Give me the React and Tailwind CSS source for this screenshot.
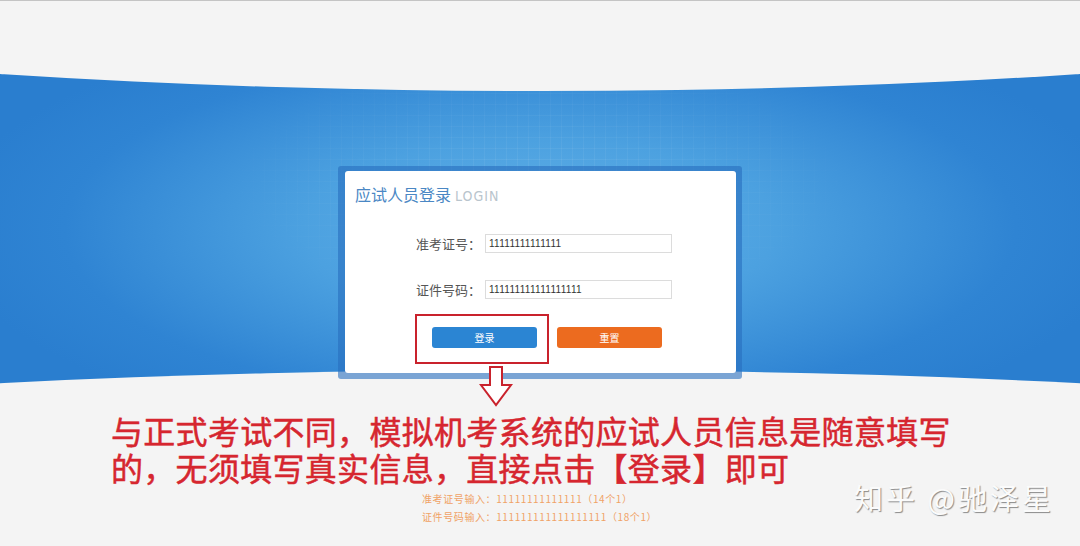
import React from 'react'

const cjk = "font-['Microsoft_YaHei','Noto_Sans_CJK_SC',sans-serif]"

function Field({ label, value }) {
    return (
        <div className="flex items-center h-[19px]">
            <span className="w-[128px] pr-[4px] text-right text-[13px] text-[#555] leading-none">{label}</span>
            <div className="w-[187px] h-[19px] border border-[#dcdcdc] bg-white flex items-center pl-[3px]">
                <span className="text-[10px] text-[#333] font-['Liberation_Sans',sans-serif] tracking-[0.3px]">{value}</span>
            </div>
        </div>
    )
}

export default function App() {
    return (
        <div className={`w-[1080px] h-[546px] bg-[#f4f4f4] relative overflow-hidden border-t border-[#c4c4c4] ${cjk}`}>
            {/* blue band */}
            <div className="relative mt-[70px] h-[315px] overflow-hidden bg-[radial-gradient(ellipse_55%_70%_at_50%_50%,#64b2e8_0%,#4ca1e0_40%,#2f84d3_80%,#2a7ecf_100%)]">
                <div className="absolute inset-0 bg-[linear-gradient(rgba(255,255,255,0.07)_1px,transparent_1px),linear-gradient(90deg,rgba(255,255,255,0.07)_1px,transparent_1px)] bg-[size:11px_11px] [mask-image:radial-gradient(ellipse_30%_45%_at_50%_35%,black,transparent)]" />
                <div className="absolute left-[-860px] top-[-420px] w-[2800px] h-[440px] rounded-[50%] bg-[#f4f4f4]" />
                <div className="absolute left-[-860px] top-[299px] w-[2800px] h-[340px] rounded-[50%] bg-[#f4f4f4]" />

                {/* login card */}
                <div className="relative z-10 mx-auto mt-[95px] w-[404px] h-[213px] rounded-[3px] bg-[rgba(40,110,190,0.6)] pt-[5px] pl-[7px] pr-[6px] pb-[6px]">
                    <div className="relative h-full rounded-[3px] bg-white pt-[15px] pl-[10px]">
                        <div className="flex items-baseline gap-[4px] leading-none">
                            <span className="text-[16px] text-[#4a87c4]">应试人员登录</span>
                            <span className="text-[14px] text-[#b9c5cd] font-['DejaVu_Sans_Condensed','Liberation_Sans_Narrow',sans-serif] tracking-[1px]">LOGIN</span>
                        </div>
                        <div className="mt-[31px] ml-[2px] flex flex-col gap-[27px]">
                            <Field label="准考证号：" value="11111111111111" />
                            <Field label="证件号码：" value="111111111111111111" />
                        </div>
                        <div className="mt-[28px] ml-[77px] flex items-start gap-[20px]">
                            <div className="relative">
                                <button className="block w-[105px] h-[21px] rounded-[3px] bg-[#2b85d3] text-white text-[10px] leading-none">登录</button>
                                <div className="absolute left-[-17px] top-[-13px] w-[134px] h-[50px] border-2 border-[#c9222c]" />
                            </div>
                            <button className="block w-[105px] h-[21px] rounded-[3px] bg-[#ec6b1f] text-white text-[10px] leading-none">重置</button>
                        </div>
                    </div>
                </div>
            </div>

            {/* arrow annotation */}
            <svg className="absolute left-[479px] top-[364px] z-20" width="34" height="44" viewBox="0 0 34 44">
                <path d="M11 2H23V20H32L17 40L2 20H11Z" fill="#fff" stroke="#c9222c" strokeWidth="2" strokeLinejoin="miter" />
            </svg>

            {/* red note */}
            <p className="mt-[26px] pl-[111px] text-[32px] leading-[37px] text-[#d6262f] font-normal [-webkit-text-stroke:0.5px_#d6262f] tracking-[0.3px]">
                与正式考试不同，模拟机考系统的应试人员信息是随意填写<br />
                的，无须填写真实信息，直接点击【登录】即可
            </p>

            <div className="mt-[4px] pl-[422px] text-[10px] leading-[18px] text-[#f0a266] tracking-[0.6px]">
                <p>准考证号输入：11111111111111（14个1）</p>
                <p>证件号码输入：111111111111111111（18个1）</p>
            </div>

            {/* watermark */}
            <div className="absolute left-[854px] top-[482px] text-[29px] leading-none text-[#fbfbfb] tracking-[3px] [text-shadow:1px_1px_1px_#8a8a8a]">
                知乎 @驰泽星
            </div>
        </div>
    )
}
